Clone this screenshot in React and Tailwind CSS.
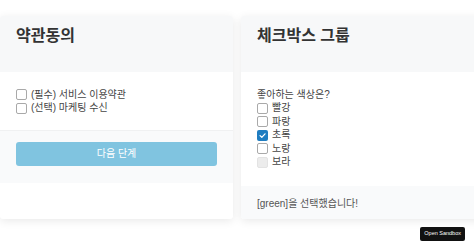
import React, { useState } from 'react';

const font = { fontFamily: '"Liberation Sans", "Noto Sans CJK KR", sans-serif' };

const Box = ({ checked, disabled }) => {
  if (disabled) {
    return <span className="inline-block w-[11px] h-[11px] rounded-[2px] border border-[#e3e3e3] bg-[#ececec] shrink-0" />;
  }
  if (checked) {
    return (
      <span className="inline-flex items-center justify-center w-[11px] h-[11px] rounded-[2px] bg-[#1f7dc1] shrink-0">
        <svg width="7" height="7" viewBox="0 0 10 10" fill="none">
          <path d="M1.5 5.2 L4 7.6 L8.6 2.6" stroke="white" strokeWidth="1.8" strokeLinecap="round" strokeLinejoin="round" />
        </svg>
      </span>
    );
  }
  return <span className="inline-block w-[11px] h-[11px] rounded-[2px] border border-[#a9a9a9] bg-white shrink-0" />;
};

const Check = ({ label, checked, disabled }) => (
  <label className="flex items-center gap-[4px] h-[13.5px] text-[10px] text-[#444] leading-none">
    <Box checked={checked} disabled={disabled} />
    <span>{label}</span>
  </label>
);

const colors = [
  { value: 'red', label: '빨강' },
  { value: 'blue', label: '파랑' },
  { value: 'green', label: '초록' },
  { value: 'yellow', label: '노랑' },
  { value: 'purple', label: '보라', disabled: true },
];

export default function App() {
  const [selected] = useState(['green']);

  return (
    <div className="relative w-[474px] h-[248px] overflow-hidden bg-white" style={font}>
      <div className="flex gap-2 pt-4">
        <div className="w-[233px] h-[203px] shrink-0 flex flex-col bg-white rounded-[3px] shadow-[0_2px_10px_rgba(0,0,0,0.09)] overflow-hidden">
          <div className="h-[56px] px-4 pt-[10px] bg-[#f7f8f9]">
            <h2 className="text-[16px] font-bold text-[#333] leading-[20px]">약관동의</h2>
          </div>
          <div className="h-[58px] px-4 pt-[16px] flex flex-col">
            <Check label="(필수) 서비스 이용약관" />
            <Check label="(선택) 마케팅 수신" />
          </div>
          <div className="h-[53px] px-4 pt-[9px] bg-[#f9fafb] border-t border-[#f0f1f2]">
            <button disabled className="w-full h-[24px] rounded-[3px] bg-[#80c4e0] text-[10px] text-white">
              다음 단계
            </button>
          </div>
          <div className="flex-1" />
        </div>

        <div className="w-[245px] h-[203px] shrink-0 flex flex-col bg-white rounded-[3px] shadow-[0_2px_10px_rgba(0,0,0,0.09)] overflow-hidden">
          <div className="h-[56px] px-4 pt-[10px] bg-[#f7f8f9]">
            <h2 className="text-[16px] font-bold text-[#333] leading-[20px]">체크박스 그룹</h2>
          </div>
          <div className="flex-1 px-4 pt-[16px]">
            <div className="text-[10px] text-[#444] leading-none h-[13.5px] flex items-center">좋아하는 색상은?</div>
            {colors.map((c) => (
              <Check key={c.value} label={c.label} checked={selected.includes(c.value)} disabled={c.disabled} />
            ))}
          </div>
          <div className="h-[33px] px-4 pt-[2px] flex items-center bg-[#f9fafb]">
            <span className="text-[10px] text-[#555]">[{selected.join(', ')}]을 선택했습니다!</span>
          </div>
        </div>
      </div>

      <button className="absolute right-[9px] bottom-[7px] h-[14px] px-[4px] rounded-[2px] bg-[#111] text-white text-[5.5px] leading-none">
        Open Sandbox
      </button>
    </div>
  );
}
